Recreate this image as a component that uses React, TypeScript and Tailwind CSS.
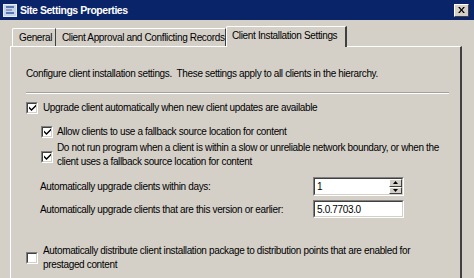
import React from "react";

const font = { fontFamily: '"Liberation Sans", Arial, sans-serif', letterSpacing: "-0.35px" };

function Check({ checked }: { checked: boolean }) {
  return (
    <div className="w-[12px] h-[12px] shrink-0 border-t border-l border-t-[#808080] border-l-[#808080] border-b border-r border-b-white border-r-white">
      <div className="w-full h-full border-t border-l border-t-[#404040] border-l-[#404040] border-b border-r border-b-[#d4d0c8] border-r-[#d4d0c8] bg-white flex items-center justify-center">
        {checked && (
          <svg width="7" height="7" viewBox="0 0 7 7">
            <path d="M0 2.5 L2.5 5 L7 0.5 L7 2.5 L2.5 7 L0 4.5 Z" fill="#000" />
          </svg>
        )}
      </div>
    </div>
  );
}

function Sunken({ children, className }: { children: React.ReactNode; className?: string }) {
  return (
    <div className={"border-t border-l border-t-[#808080] border-l-[#808080] border-b border-r border-b-white border-r-white " + (className ?? "")}>
      <div className="w-full h-full border-t border-l border-t-[#404040] border-l-[#404040] border-b border-r border-b-[#d4d0c8] border-r-[#d4d0c8] bg-white flex items-center">
        {children}
      </div>
    </div>
  );
}

function SpinBtn({ up }: { up: boolean }) {
  return (
    <div className="flex-1 bg-[#d4d0c8] border-t border-l border-t-white border-l-white border-b border-r border-b-[#404040] border-r-[#404040] flex items-center justify-center">
      <svg width="5" height="3" viewBox="0 0 5 3">
        {up ? <path d="M0 3 L2.5 0 L5 3 Z" fill="#000" /> : <path d="M0 0 L2.5 3 L5 0 Z" fill="#000" />}
      </svg>
    </div>
  );
}

export default function App() {
  return (
    <div className="w-[474px] h-[278px] overflow-hidden bg-[#d4d0c8] text-[10px] leading-[13px] text-black flex flex-col whitespace-nowrap" style={font}>
      {/* Title bar */}
      <div className="h-[20px] shrink-0 bg-[#0a246a] flex items-center pl-[3px] pr-[5px]">
        <div className="w-[14px] h-[13px] bg-[#c8d4e8] border border-[#e8eef8] flex flex-col justify-center gap-[1px] px-[2px]">
          <div className="h-[2px] bg-[#5a78b0]" />
          <div className="h-[2px] bg-[#8aa0c8] w-[6px]" />
          <div className="h-[2px] bg-[#5a78b0]" />
        </div>
        <span className="ml-[3px] text-white font-bold text-[10.5px] tracking-[-0.45px]">Site Settings Properties</span>
        <div className="ml-auto w-[15px] h-[13px] bg-[#d4d0c8] border-t border-l border-t-white border-l-white border-b border-r border-b-[#404040] border-r-[#404040] flex items-center justify-center">
          <svg width="7" height="6" viewBox="0 0 8 7">
            <path d="M0 0 H2 L4 2.5 L6 0 H8 L5 3.5 L8 7 H6 L4 4.5 L2 7 H0 L3 3.5 Z" fill="#000" />
          </svg>
        </div>
      </div>

      {/* Body */}
      <div className="flex-1 pl-[10px] pr-[12px] pt-[5px] flex flex-col">
        {/* Tabs */}
        <div className="flex items-end h-[21px] pl-[2px] relative z-10">
          <div className="w-[44px] h-[18px] pl-[6px] flex items-center bg-[#d4d0c8] border-t border-l border-t-white border-l-white border-r border-r-[#404040] rounded-tl-[2px]">General</div>
          <div className="w-[170px] h-[18px] pl-[6px] flex items-center bg-[#d4d0c8] border-t border-t-white border-r border-r-[#404040]">Client Approval and Conflicting Records</div>
          <div className="w-[121px] h-[21px] -mb-[1px] pl-[5px] pb-[3px] flex items-center bg-[#d4d0c8] border-t border-l border-t-white border-l-white border-r-2 border-r-[#404040] rounded-tl-[2px]">Client Installation Settings</div>
        </div>
        {/* Panel */}
        <div className="flex-1 border-t border-l border-t-white border-l-white border-r-2 border-r-[#404040] pl-[15px] pr-[11px] pt-[20px] flex flex-col">
          <div>Configure client installation settings.&nbsp; These settings apply to all clients in the hierarchy.</div>
          <div className="mt-[12px] border-t border-t-[#a0a0a0] border-b border-b-white" />
          <div className="mt-[7px] flex items-center gap-[5px]">
            <Check checked />
            <span>Upgrade client automatically when new client updates are available</span>
          </div>
          <div className="pl-[15px] flex flex-col">
            <div className="mt-[11px] flex items-center gap-[4px]">
              <Check checked />
              <span>Allow clients to use a fallback source location for content</span>
            </div>
            <div className="mt-[3px] flex items-center gap-[4px]">
              <div className="pt-[3px]">
                <Check checked />
              </div>
              <span className="leading-[14px]">
                Do not run program when a client is within a slow or unreliable network boundary, or when the
                <br />
                client uses a fallback source location for content
              </span>
            </div>
            <div className="mt-[8px] flex items-center -ml-[1px]">
              <span className="w-[273px]">Automatically upgrade clients within days:</span>
              <Sunken className="w-[91px] h-[19px]">
                <span className="pl-[2px] flex-1">1</span>
                <div className="w-[13px] h-full flex flex-col">
                  <SpinBtn up />
                  <SpinBtn up={false} />
                </div>
              </Sunken>
            </div>
            <div className="mt-[4px] flex items-center -ml-[1px]">
              <span className="w-[273px]">Automatically upgrade clients that are this version or earlier:</span>
              <Sunken className="w-[91px] h-[18px]">
                <span className="pl-[2px]">5.0.7703.0</span>
              </Sunken>
            </div>
          </div>
          <div className="mt-[26px] flex items-center gap-[5px]">
            <Check checked={false} />
            <span className="leading-[14px]">
              Automatically distribute client installation package to distribution points that are enabled for
              <br />
              prestaged content
            </span>
          </div>
        </div>
      </div>
    </div>
  );
}
